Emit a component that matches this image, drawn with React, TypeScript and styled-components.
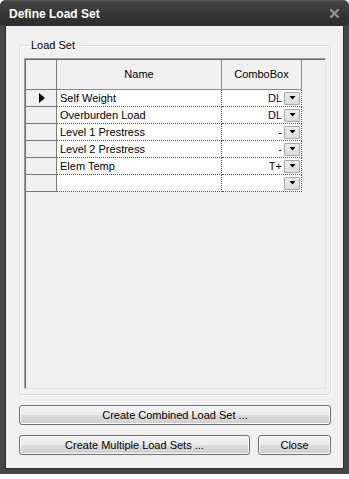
import React from "react";
import styled, { createGlobalStyle } from "styled-components";

const Global = createGlobalStyle`
  html, body { margin: 0; padding: 0; background: #ffffff; }
  body { font-family: "Liberation Sans", Arial, sans-serif; }
  * { box-sizing: border-box; }
`;

const Window = styled.div`
  width: 349px;
  height: 474px;
  background: #464646;
  border-radius: 6px 6px 0 0;
  display: flex;
  flex-direction: column;
`;

const TitleBar = styled.div`
  height: 25px;
  flex: none;
  display: flex;
  align-items: center;
  justify-content: space-between;
  padding: 0 10px 0 9px;
  border-radius: 6px 6px 0 0;
  background: linear-gradient(#585858 0px, #444444 2px, #353535 14px, #2d2d2d 25px);
`;

const Title = styled.span`
  color: #ffffff;
  font: bold 12px "Liberation Sans", Arial, sans-serif;
  line-height: 14px;
  padding-top: 2px;
`;

const CloseGlyph = styled.svg`
  width: 9px;
  height: 9px;
  display: block;
  margin-top: 2px;
`;

const Client = styled.div`
  flex: 1;
  margin: 0 5px 5px 5px;
  border: 1px solid #2e2e2e;
  background: #f0f0f0;
  display: flex;
  flex-direction: column;
  padding: 13px 12px 13px 13px;
  min-height: 0;
`;

const Group = styled.fieldset`
  flex: 1;
  margin: 0;
  min-height: 0;
  border: 1px solid #d5dfe5;
  border-radius: 3px;
  box-shadow: inset 1px 1px 0 #ffffff, 1px 1px 0 #ffffff;
  padding: 6px 4px 5px 4px;
  display: flex;
  flex-direction: column;
`;

const Legend = styled.legend`
  font: 11px "Liberation Sans", Arial, sans-serif;
  line-height: 13px;
  color: #000;
  padding: 0 2px;
  margin-left: 5px;
`;

const GridFrame = styled.div`
  flex: 1;
  background: #f0f0f0;
  border: 1px solid;
  border-color: #a0a0a0 #e3e3e3 #e3e3e3 #a0a0a0;
  box-shadow: inset 1px 1px 0 #696969;
  padding: 1px 0 0 1px;
`;

const Table = styled.div`
  display: grid;
  grid-template-columns: 31px 165px 80px;
  grid-template-rows: 30px repeat(6, 17px);
  font: 11px "Liberation Sans", Arial, sans-serif;
  color: #000;
`;

const Corner = styled.div`
  border-right: 1px solid #7a7a7a;
  border-bottom: 1px solid #7a7a7a;
  background: #f0f0f0;
`;

const HeaderCell = styled.div`
  border-right: 1px solid #8c8c8c;
  border-bottom: 1px solid #8c8c8c;
  background: #f0f0f0;
  display: flex;
  align-items: center;
  justify-content: center;
  padding-bottom: 1px;
`;

const RowHead = styled.div`
  border-right: 1px solid #7a7a7a;
  border-bottom: 1px solid #7a7a7a;
  background: #f0f0f0;
  display: flex;
  align-items: center;
  justify-content: center;
  padding-left: 2px;
`;

const Cell = styled.div<{ $right?: boolean }>`
  background: #ffffff;
  border-right: 1px dotted #555555;
  border-bottom: 1px dotted #555555;
  display: flex;
  align-items: center;
  justify-content: ${(p) => (p.$right ? "flex-end" : "flex-start")};
  padding: ${(p) => (p.$right ? "0 1px 0 0" : "0 0 0 3px")};
  white-space: nowrap;
  overflow: hidden;
`;

const ComboValue = styled.span`
  margin-right: 2px;
  color: #1a0033;
`;

const DropButton = styled.div`
  width: 16px;
  height: 13px;
  border: 1px solid #a7a7a7;
  border-radius: 1px;
  background: linear-gradient(#ececec, #dcdcdc);
  display: flex;
  align-items: center;
  justify-content: center;
`;

const Buttons = styled.div`
  display: flex;
  flex-direction: column;
  gap: 10px;
  margin-top: 10px;
  flex: none;
`;

const ButtonRow = styled.div`
  display: flex;
  gap: 8px;
`;

const Button = styled.button<{ $w?: number }>`
  height: 20px;
  flex: ${(p) => (p.$w ? "none" : "1 1 auto")};
  width: ${(p) => (p.$w ? `${p.$w}px` : "auto")};
  border: 1px solid #707070;
  border-radius: 3px;
  background: linear-gradient(#f2f2f2 0%, #ebebeb 50%, #dddddd 50%, #cfcfcf 100%);
  box-shadow: inset 0 0 0 1px #fbfbfb;
  font: 11px "Liberation Sans", Arial, sans-serif;
  color: #000;
  padding: 0;
  display: flex;
  align-items: center;
  justify-content: center;
`;

const rows: { name: string; combo: string }[] = [
  { name: "Self Weight", combo: "DL" },
  { name: "Overburden Load", combo: "DL" },
  { name: "Level 1 Prestress", combo: "-" },
  { name: "Level 2 Prestress", combo: "-" },
  { name: "Elem Temp", combo: "T+" },
  { name: "", combo: "" },
];

const Arrow = () => (
  <svg width="7" height="4" viewBox="0 0 7 4" style={{ display: "block" }}>
    <polygon points="0.5,0 6.5,0 3.5,3.5" fill="#000" />
  </svg>
);

const Pointer = () => (
  <svg width="6" height="10" viewBox="0 0 6 10" style={{ display: "block" }}>
    <polygon points="0,0 6,5 0,10" fill="#000" />
  </svg>
);

export default function App() {
  return (
    <>
      <Global />
      <Window>
        <TitleBar>
          <Title>Define Load Set</Title>
          <CloseGlyph viewBox="0 0 9 9">
            <path d="M1 1 L8 8 M8 1 L1 8" stroke="#8e8e8e" strokeWidth="2.4" strokeLinecap="square" />
          </CloseGlyph>
        </TitleBar>
        <Client>
          <Group>
            <Legend>Load Set</Legend>
            <GridFrame>
              <Table>
                <Corner />
                <HeaderCell>Name</HeaderCell>
                <HeaderCell>ComboBox</HeaderCell>
                {rows.map((r, i) => (
                  <React.Fragment key={i}>
                    <RowHead>{i === 0 ? <Pointer /> : null}</RowHead>
                    <Cell>{r.name}</Cell>
                    <Cell $right>
                      {r.combo ? <ComboValue>{r.combo}</ComboValue> : null}
                      <DropButton>
                        <Arrow />
                      </DropButton>
                    </Cell>
                  </React.Fragment>
                ))}
              </Table>
            </GridFrame>
          </Group>
          <Buttons>
            <Button>Create Combined Load Set ...</Button>
            <ButtonRow>
              <Button>Create Multiple Load Sets ...</Button>
              <Button $w={73}>Close</Button>
            </ButtonRow>
          </Buttons>
        </Client>
      </Window>
    </>
  );
}
